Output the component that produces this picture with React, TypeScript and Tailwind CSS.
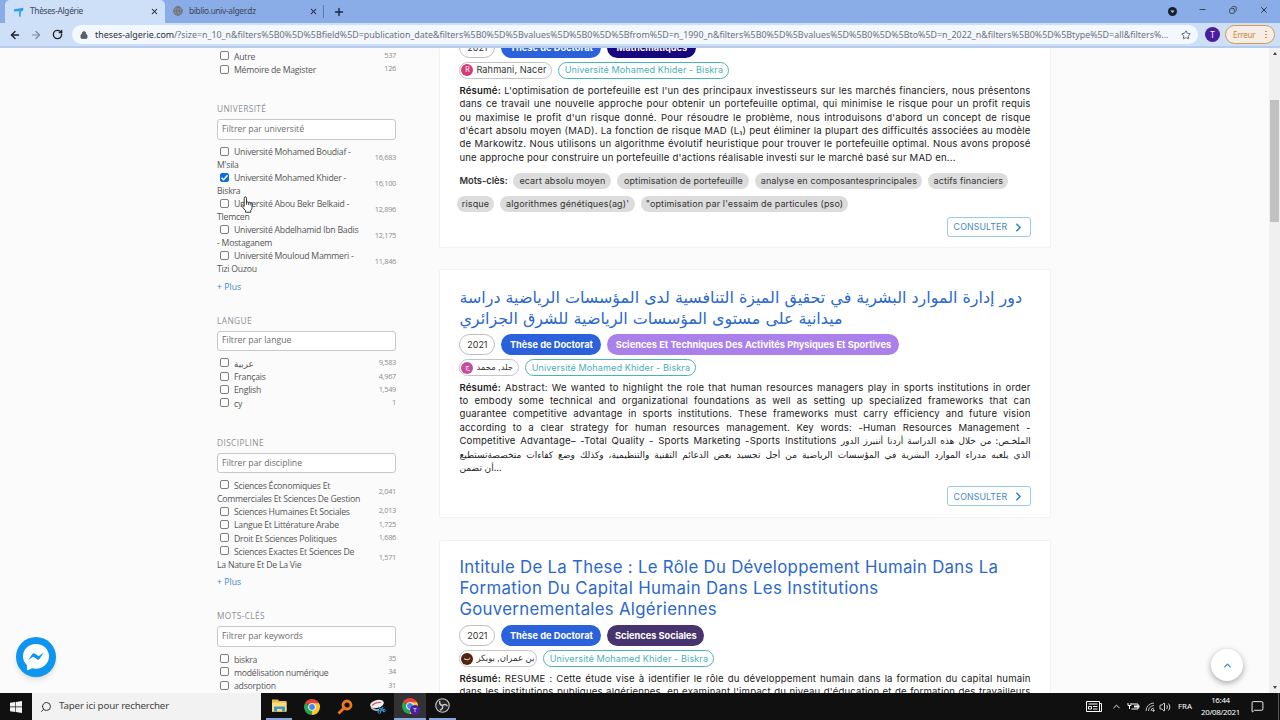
import React from 'react';
import clsx from 'clsx';
import { ArrowLeft, ArrowRight, RotateCw, Lock, Star, X, Plus, Minus, Copy, Search, ChevronUp, ChevronRight, Globe, Volume2, MessageSquare } from 'lucide-react';

interface FacetItem {
  label: string[];
  count: string;
  checked?: boolean;
}

interface FacetProps {
  title?: string;
  placeholder?: string;
  items: FacetItem[];
  more?: boolean;
}

const typeItems: FacetItem[] = [
  { label: ['Autre'], count: '537' },
  { label: ['Mémoire de Magister'], count: '126' },
];

const universityItems: FacetItem[] = [
  { label: ['Université Mohamed Boudiaf -', "M'sila"], count: '16,683' },
  { label: ['Université Mohamed Khider -', 'Biskra'], count: '16,100', checked: true },
  { label: ['Université Abou Bekr Belkaid -', 'Tlemcen'], count: '12,896' },
  { label: ['Université Abdelhamid Ibn Badis', '- Mostaganem'], count: '12,175' },
  { label: ['Université Mouloud Mammeri -', 'Tizi Ouzou'], count: '11,846' },
];

const languageItems: FacetItem[] = [
  { label: ['عربية'], count: '9,583' },
  { label: ['Français'], count: '4,967' },
  { label: ['English'], count: '1,549' },
  { label: ['cy'], count: '1' },
];

const disciplineItems: FacetItem[] = [
  { label: ['Sciences Économiques Et', 'Commerciales Et Sciences De Gestion'], count: '2,041' },
  { label: ['Sciences Humaines Et Sociales'], count: '2,013' },
  { label: ['Langue Et Littérature Arabe'], count: '1,725' },
  { label: ['Droit Et Sciences Politiques'], count: '1,686' },
  { label: ['Sciences Exactes Et Sciences De', 'La Nature Et De La Vie'], count: '1,571' },
];

const keywordItems: FacetItem[] = [
  { label: ['biskra'], count: '35' },
  { label: ['modélisation numérique'], count: '34' },
  { label: ['adsorption'], count: '31' },
];

const Checkbox: React.FC<{ checked?: boolean }> = ({ checked }) => (
  <span className={clsx('ml-[3px] mr-[5px] -mt-[3px] flex h-[9px] w-[9px] shrink-0 items-center justify-center rounded-[2px] border', checked ? 'border-[#0b6fe0] bg-[#0b6fe0]' : 'border-[#7d7d7d] bg-white')}>
    {checked && (
      <svg viewBox="0 0 9 9" className="h-[9px] w-[9px] shrink-0" fill="none" stroke="white" strokeWidth="1.5">
        <path d="M1.5 4.7 3.6 6.7 7.6 2.2" />
      </svg>
    )}
  </span>
);

const Facet: React.FC<FacetProps> = ({ title, placeholder, items, more }) => (
  <div className={more ? 'mb-[21px]' : 'mb-[26px]'}>
    {title && (
      <>
        <h3 className="h-[16px] text-[8.3px] leading-[12px] tracking-[0.4px] text-[#8b8e93]">{title}</h3>
        <div className="mb-[6.4px] flex h-[20.5px] items-center rounded-[3px] border border-[#c8c8c8] bg-white pl-[4px] text-[8.7px] text-[#6d6d6d]">{placeholder}</div>
      </>
    )}
    {items.map((item) => (
      <div key={item.label[0]} className={clsx('flex items-center justify-between', item.label.length > 1 ? 'h-[26px]' : 'h-[13.35px]')}>
        <div className="text-[8.7px] leading-[13px] tracking-[-0.24px] whitespace-nowrap text-[#565656]">
          <div className="flex items-center">
            <Checkbox checked={item.checked} />
            {item.label[0]}
          </div>
          {item.label[1] && <div>{item.label[1]}</div>}
        </div>
        <span className="-mt-[3px] text-[7.4px] tracking-[-0.3px] text-[#8c8c8c]">{item.count}</span>
      </div>
    ))}
    {more && <div className="mt-[4.6px] h-[13px] text-[8.7px] leading-[13px] text-[#3c87c7]">+ Plus</div>}
  </div>
);

interface BadgesProps {
  kind: string;
  kindClass: string;
}

const Badges: React.FC<BadgesProps> = ({ kind, kindClass }) => (
  <div className="flex h-[21px] gap-[6px] text-[9.25px] font-bold whitespace-nowrap text-white">
    <span className="flex w-[36px] items-center justify-center rounded-full border border-[#bdbdbd] bg-white text-[9px] font-normal text-[#333]">2021</span>
    <span className="flex w-[100px] items-center justify-center rounded-full bg-[#2b62db]">Thèse de Doctorat</span>
    <span className={clsx('flex items-center justify-center rounded-full', kindClass)}>{kind}</span>
  </div>
);

interface AuthorProps {
  name: string;
  initial: string;
  arabic?: boolean;
  avatarClass: string;
  boxClass: string;
}

const Author: React.FC<AuthorProps> = ({ name, initial, arabic, avatarClass, boxClass }) => (
  <div className="mt-[4px] flex h-[16.5px] gap-[6px] whitespace-nowrap">
    <span className={clsx('flex items-center rounded-full border border-[#c4c4c4] pl-[1px] text-[#333]', boxClass)}>
      <span className={clsx('mr-[3px] flex h-[12px] w-[12px] shrink-0 items-center justify-center rounded-full text-[7px] text-white', avatarClass)}>{initial}</span>
      <span className={arabic ? 'text-[8.5px]' : 'text-[9.2px] tracking-[0.1px]'}>{name}</span>
    </span>
    <span className="flex w-[171px] items-center justify-center rounded-full border border-[#4bb5b5] text-[9.1px] tracking-[0.1px] text-[#4bb0b4]">Université Mohamed Khider - Biskra</span>
  </div>
);

const Line: React.FC<{ children: React.ReactNode; last?: boolean }> = ({ children, last }) => (
  <div className={clsx('h-[13.35px] whitespace-nowrap', !last && '[text-align-last:justify]')}>{children}</div>
);

const Keyword: React.FC<{ children: string; width: string }> = ({ children, width }) => (
  <span className={clsx('flex h-[16px] items-center justify-center rounded-full bg-[#dcdcdc] text-[9px] tracking-[0.12px] whitespace-nowrap text-[#333]', width)}>{children}</span>
);

const Consulter: React.FC = () => (
  <div className="flex h-[20px] w-[84px] items-center justify-between self-end rounded-[3px] border border-[#9cc9e6] pr-[6px] pl-[6px] text-[8.8px] tracking-[0.1px] text-[#4589c4]">
    CONSULTER
    <ChevronRight size={13} strokeWidth={3} className="-mr-[1px] text-[#2e86d0]" />
  </div>
);

const card = 'flex shrink-0 flex-col rounded-[2px] border border-[#f2f2f2] bg-white px-[19.4px]';
const body = 'text-[9.6px] leading-[13.35px] tracking-[0.17px] text-[#222]';

const Results: React.FC = () => (
  <main className="ml-[43px] flex w-[612px] flex-col gap-[21.5px] font-[Inter,'DejaVu_Sans',sans-serif]">
    <section className={clsx(card, 'h-[199.5px] border-t-0')}>
      <div className="-mt-[11px]">
        <Badges kind="Mathématiques" kindClass="w-[89px] bg-[#17067d]" />
      </div>
      <Author name="Rahmani, Nacer" initial="R" avatarClass="bg-[#d23d77]" boxClass="w-[93px]" />
      <div className={clsx(body, 'mt-[5.5px]')}>
        <Line><b className="font-semibold">Résumé:</b> L'optimisation de portefeuille est l'un des principaux investisseurs sur les marchés financiers, nous présentons</Line>
        <Line>dans ce travail une nouvelle approche pour obtenir un portefeuille optimal, qui minimise le risque pour un profit requis</Line>
        <Line>ou maximise le profit d'un risque donné. Pour résoudre le problème, nous introduisons d'abord un concept de risque</Line>
        <Line>d'écart absolu moyen (MAD). La fonction de risque MAD (L₁) peut éliminer la plupart des difficultés associées au modèle</Line>
        <Line>de Markowitz. Nous utilisons un algorithme évolutif heuristique pour trouver le portefeuille optimal. Nous avons proposé</Line>
        <Line last>une approche pour construire un portefeuille d'actions réalisable investi sur le marché basé sur MAD en...</Line>
      </div>
      <div className="mt-[9px] flex gap-[6px]">
        <b className="-mr-[1px] w-[49px] text-[9.3px] leading-[16px] font-semibold whitespace-nowrap text-[#333]">Mots-clès:</b>
        <Keyword width="w-[98px]">ecart absolu moyen</Keyword>
        <Keyword width="w-[132px]">optimisation de portefeuille</Keyword>
        <Keyword width="w-[167px]">analyse en composantesprincipales</Keyword>
        <Keyword width="w-[80px]">actifs financiers</Keyword>
      </div>
      <div className="mt-[7px] -ml-[2.4px] flex gap-[6px]">
        <Keyword width="w-[37px]">risque</Keyword>
        <Keyword width="w-[135px]">algorithmes génétiques(ag)'</Keyword>
        <Keyword width="w-[207px]">"optimisation par l'essaim de particules (pso)</Keyword>
      </div>
      <div className="mt-[5px] flex flex-col"><Consulter /></div>
    </section>

    <section className={clsx(card, 'h-[249px] pt-[17px]')}>
      <h2 className="font-['DejaVu_Sans'] text-[15.95px] leading-[21.3px] whitespace-nowrap text-[#2a68cc]">
        <div>دور إدارة الموارد البشرية في تحقيق الميزة التنافسية لدى المؤسسات الرياضية دراسة</div>
        <div>ميدانية على مستوى المؤسسات الرياضية للشرق الجزائري</div>
      </h2>
      <div className="mt-[4.7px]">
        <Badges kind="Sciences Et Techniques Des Activités Physiques Et Sportives" kindClass="w-[292px] bg-[#aa80ea]" />
      </div>
      <Author name="جلد, محمد" initial="ج" arabic avatarClass="bg-[#c54ba3]" boxClass="w-[60px]" />
      <div className={clsx(body, 'mt-[5px]')}>
        <Line><b className="font-semibold">Résumé:</b> Abstract: We wanted to highlight the role that human resources managers play in sports institutions in order</Line>
        <Line>to embody some technical and organizational foundations as well as setting up specialized frameworks that can</Line>
        <Line>guarantee competitive advantage in sports institutions. These frameworks must carry efficiency and future vision</Line>
        <Line>according to a clear strategy for human resources management. Key words: -Human Resources Management -</Line>
        <Line>Competitive Advantage– -Total Quality - Sports Marketing -Sports Institutions <span className="text-[8.9px] leading-none tracking-normal">الملخـص: من خلال هذه الدراسة أردنا أننبرز الدور</span></Line>
        <Line><span className="text-[9px] leading-none tracking-normal">الذي يلعبه مدراء الموارد البشرية في المؤسسات الرياضية من أجل تجسيد بعض الدعائم التقنية والتنظيمية، وكذلك وضع كفاءات متخصصةتستطيع</span></Line>
        <Line last><span className="text-[9.1px] leading-none tracking-normal">أن تضمن...</span></Line>
      </div>
      <div className="mt-[12px] flex flex-col"><Consulter /></div>
    </section>

    <section className={clsx(card, 'h-[249px] pt-[16px]')}>
      <h2 className="text-[16.8px] leading-[21.3px] tracking-[0.3px] whitespace-nowrap text-[#2a68cc]">
        <div>Intitule De La These : Le Rôle Du Développement Humain Dans La</div>
        <div className="tracking-[0.38px]">Formation Du Capital Humain Dans Les Institutions</div>
        <div>Gouvernementales Algériennes</div>
      </h2>
      <div className="mt-[5px]">
        <Badges kind="Sciences Sociales" kindClass="w-[97px] bg-[#47346f]" />
      </div>
      <Author name="بن عمران, بوبكر" initial="ب" arabic avatarClass="bg-[#53210e]" boxClass="w-[78px]" />
      <div className={clsx(body, 'mt-[5px]')}>
        <Line><b className="font-semibold">Résumé:</b> RESUME : Cette étude vise à identifier le rôle du développement humain dans la formation du capital humain</Line>
        <Line>dans les institutions publiques algériennes, en examinant l'impact du niveau d'éducation et de formation des travailleurs</Line>
      </div>
    </section>
  </main>
);

const Browser: React.FC = () => (
  <header className="h-[48px] bg-[#8aade8]">
    <div className="flex h-[23px] items-center text-[8.4px] tracking-[-0.35px] text-[#3c4757]">
      <div className="ml-[5px] flex h-full w-[160px] items-center rounded-t-[5px] bg-[#cedff8] pr-[6px] pl-[9px]">
        <svg viewBox="0 0 10 10" className="mr-[6px] h-[10px] w-[10px]">
          <path d="M0 2.2 9.5.7 9 4 0 4.6z" fill="#2e9fe6" />
          <path d="M4.8 3.5h2.8L6.5 9.8H5z" fill="#4aa9df" />
        </svg>
        <span className="flex-1">Thèses-Algérie</span>
        <X size={9} strokeWidth={2.8} className="text-[#222]" />
      </div>
      <div className="flex w-[159px] items-center border-r border-[#587cb5] pr-[5px] pl-[8px]">
        <Globe size={10} strokeWidth={2.4} className="mr-[6px] rounded-full bg-[#8a929d] text-[#69717c]" />
        <span className="flex-1">biblio.univ-alger.dz</span>
        <X size={9} strokeWidth={2.8} className="text-[#222]" />
      </div>
      <Plus size={12} strokeWidth={2.8} className="ml-[9px] text-[#1d2633]" />
      <svg viewBox="0 0 10 10" className="mr-[21px] ml-auto h-[9px] w-[9px]">
        <circle cx="5" cy="5" r="5" fill="#16202e" />
        <path d="M2.8 4h4.4L5 6.8z" fill="#b9cff2" />
      </svg>
      <Minus size={9} className="mr-[22px] -translate-y-[2px] text-[#222]" />
      <Copy size={8} className="mr-[22px] -translate-y-[2px] -scale-x-100 text-[#222]" />
      <X size={10} className="mr-[11px] -translate-y-[2px] text-[#222]" />
    </div>
    <div className="flex h-[25px] items-center border-b-2 border-[#b8cbea] bg-[#cedff8]">
      <ArrowLeft size={12} strokeWidth={2.8} className="ml-[9px] text-[#222]" />
      <ArrowRight size={12} strokeWidth={2.4} className="ml-[9px] text-[#7e8a9c]" />
      <RotateCw size={11} strokeWidth={3} className="ml-[10px] text-[#222]" />
      <div className="ml-[9px] flex h-[19px] w-[1126px] items-center rounded-full bg-[#f3f8fe] pr-[7px] pl-[8px]">
        <Lock size={8} strokeWidth={3} fill="#5c6066" className="mr-[7px] text-[#5c6066]" />
        <div className="flex-1 text-[8.9px] whitespace-nowrap text-[#6c7178]">
          <span className="text-[#2a2f36]">theses-algerie.com</span>/?size=n_10_n&amp;filters%5B0%5D%5Bfield%5D=publication_date&amp;filters%5B0%5D%5Bvalues%5D%5B0%5D%5Bfrom%5D=n_1990_n&amp;filters%5B0%5D%5Bvalues%5D%5B0%5D%5Bto%5D=n_2022_n&amp;filters%5B0%5D%5Btype%5D=all&amp;filters%...
        </div>
        <Star size={10} strokeWidth={2.2} className="shrink-0 text-[#555b63]" />
      </div>
      <span className="ml-[7px] flex h-[15px] w-[15px] items-center justify-center rounded-full bg-[#4c1c9e] text-[8px] text-white">T</span>
      <div className="ml-[5px] flex h-[18.5px] w-[50px] items-center justify-between rounded-full border border-[#d69a51] bg-[#f6eee6] pr-[7px] pl-[7px] text-[8px] tracking-[-0.2px] text-[#cf842c]">
        Erreur
        <span className="flex flex-col gap-[1.5px]">
          <i className="h-[1.6px] w-[1.6px] bg-[#d98e36]" />
          <i className="h-[1.6px] w-[1.6px] bg-[#d98e36]" />
          <i className="h-[1.6px] w-[1.6px] bg-[#d98e36]" />
        </span>
      </div>
    </div>
  </header>
);

const ChromeLogo: React.FC = () => (
  <svg viewBox="0 0 16 16" className="h-[16px] w-[16px]">
    <path d="M8 8 1.1 4A8 8 0 0 1 14.9 4z" fill="#e24436" />
    <path d="M8 8 14.9 4A8 8 0 0 1 8 16z" fill="#f7c62c" />
    <path d="M8 8v8A8 8 0 0 1 1.1 4z" fill="#2fa351" />
    <path d="M8 4.2h6.9L16 8 11 10z" fill="#f7c62c" />
    <circle cx="8" cy="8" r="3.8" fill="#fff" />
    <circle cx="8" cy="8" r="2.9" fill="#4786ee" />
  </svg>
);

const Taskbar: React.FC = () => (
  <footer className="flex h-[27px] items-center bg-[#101011] text-white">
    <div className="flex w-[32px] justify-center">
      <svg viewBox="0 0 12 12" className="h-[12px] w-[12px]" fill="#f3f3f3">
        <path d="M0 1.7 5.4 1v4.6H0zM6 .9 12 0v5.6H6zM0 6.3h5.4V11L0 10.2zM6 6.3h6V12l-6-.9z" />
      </svg>
    </div>
    <div className="flex h-full w-[229px] items-center bg-[#f2f2f2] pl-[8px] text-[9.8px] tracking-[-0.2px] text-[#444]">
      <Search size={12} strokeWidth={1.8} className="mr-[7px] -scale-x-100 text-[#222]" />
      Taper ici pour rechercher
    </div>
    <div className="ml-[5px] flex h-full w-[26px] items-center justify-center border-b-2 border-[#8ba6dc]">
      <svg viewBox="0 0 15 13" className="h-[13px] w-[15px]">
        <path d="M0 .5h6l1 1.5h7.5v11H0z" fill="#e9b93d" />
        <path d="M0 3.5h14.5V12H0z" fill="#fbdc7b" />
        <path d="M2 12.5V7.5h11v5h-3V10H5v2.5z" fill="#3e95d3" />
      </svg>
    </div>
    <div className="ml-[12px]"><ChromeLogo /></div>
    <svg viewBox="0 0 16 16" className="ml-[17px] h-[16px] w-[16px]" fill="none" stroke="#ee7913">
      <circle cx="10" cy="6" r="4" strokeWidth="2.8" />
      <path d="M7 9 1.5 14.5" strokeWidth="2.8" />
    </svg>
    <svg viewBox="0 0 17 15" className="ml-[16px] h-[15px] w-[17px]">
      <ellipse cx="8" cy="5" rx="7" ry="4" fill="#eee" transform="rotate(-15 8 5)" />
      <path d="M3 6.5q4-4 9-3" stroke="#d2596c" strokeWidth="1.2" fill="none" />
      <path d="M2 8.5q4 4 8 2" stroke="#c2cbd4" strokeWidth="1.5" fill="none" />
      <path d="m9 8 6 4M14 8l-3 5" stroke="#3c94c9" strokeWidth="1.3" />
      <circle cx="10.5" cy="13" r="1.4" stroke="#3c94c9" fill="none" />
      <circle cx="15" cy="11.5" r="1.3" stroke="#3c94c9" fill="none" />
    </svg>
    <div className="relative ml-[8px] flex h-full w-[32px] items-center justify-center border-b-2 border-[#8ba6dc] bg-[#323234]">
      <ChromeLogo />
      <span className="absolute right-[6px] bottom-[3px] flex h-[10px] w-[10px] items-center justify-center rounded-full bg-[#4c1fa5] text-[6px]">T</span>
    </div>
    <div className="ml-[3px] flex h-full w-[27px] items-center justify-center border-b-2 border-[#8ba6dc]">
      <svg viewBox="0 0 16 16" className="h-[15px] w-[15px]" fill="none" stroke="#c9c9c9">
        <circle cx="8" cy="8" r="7.2" fill="#252529" strokeWidth="1.2" />
        <path d="M8 8Q4.5 7.5 5 3.2M8 8q2.5-2.5 5.2.5M8 8q1 3.8-2.8 4.8" strokeWidth="1.5" />
      </svg>
    </div>
    <div className="ml-auto flex h-full items-center">
      <svg viewBox="0 0 16 11" className="mr-[9px] h-[11px] w-[16px]" fill="none" stroke="white">
        <path d="M.5.5h13v10H.5zM13.5 2.5h2v8h-2M2.5 3h9M2.5 5.5h3v2.500h-3zM7 5.5h4.500M7 8h4.500" />
      </svg>
      <ChevronUp size={11} className="mr-[5px]" />
      <svg viewBox="0 0 13 9" className="mr-[5px] h-[9px] w-[13px]" fill="none" stroke="white">
        <path d="M4.5 2h6.5v5H4.5M1 1v2.5h3V1M2.5 3.5V7" />
        <path d="M11 4.5h1.5M7 4.5h4" strokeWidth="2" />
      </svg>
      <svg viewBox="0 0 10 10" className="mr-[4px] h-[10px] w-[10px]" fill="none" stroke="#bbb">
        <path d="M1 9a8 8 0 0 1 8-8M3.5 9A5.5 5.5 0 0 1 9 3.5M6 9a3 3 0 0 1 3-3" />
        <circle cx="8.5" cy="8.5" r=".8" fill="#fff" />
      </svg>
      <Volume2 size={12} strokeWidth={1.7} className="mr-[7px]" />
      <span className="w-[14px] text-[7.9px]">FRA</span>
      <div className="ml-[8px] w-[41px] text-center text-[7.9px] leading-[11.5px] tracking-[-0.3px]">
        <div>16:44</div>
        <div>20/08/2021</div>
      </div>
      <MessageSquare size={13} strokeWidth={1.7} className="mr-[14px] ml-[10px]" />
      <div className="h-full w-[2px] border-l border-[#555]" />
    </div>
  </footer>
);

const HandCursor: React.FC = () => (
  <svg viewBox="0 0 12 17" className="absolute top-[148px] left-[241px] h-[17px] w-[12px]">
    <path d="M3.2 10.5V2.2q0-1.4 1.1-1.4t1.2 1.4v4q.9-.8 1.8.2.9-.7 1.8.3 1.9-.6 1.9 1.3v3.2q0 2.3-1.2 3.2v1.8H4.5v-1.5L.8 10.3Q.2 9 1.4 8.9z" fill="#fff" stroke="#222" strokeWidth=".9" />
    <path d="M5.5 6v2.8M7.4 6.6v2.5M9.2 7v2.3" stroke="#222" strokeWidth=".8" />
  </svg>
);

const App: React.FC = () => (
  <div className="flex h-[720px] w-[1280px] flex-col overflow-hidden bg-[#fbfbfb] font-['Noto_Sans','DejaVu_Sans',sans-serif]">
    <Browser />
    <div className="relative flex h-[645px] overflow-hidden">
      <aside className="ml-[217px] w-[179px] shrink-0 pt-[2.5px] font-['Open_Sans','DejaVu_Sans',sans-serif]">
        <Facet items={typeItems} />
        <Facet title="UNIVERSITÉ" placeholder="Filtrer par université" items={universityItems} more />
        <Facet title="LANGUE" placeholder="Filtrer par langue" items={languageItems} />
        <Facet title="DISCIPLINE" placeholder="Filtrer par discipline" items={disciplineItems} more />
        <Facet title="MOTS-CLÉS" placeholder="Filtrer par keywords" items={keywordItems} />
      </aside>
      <Results />
      <div className="ml-auto flex h-full w-[11px] flex-col items-center bg-[#f0f0f0]">
        <i className="mt-[4px] border-x-[2.5px] border-b-[3px] border-x-transparent border-b-[#444]" />
        <i className="mt-[45px] h-[122px] w-[9px] bg-[#c1c1c1]" />
        <i className="mt-auto mb-[4px] border-x-[2.5px] border-t-[3px] border-x-transparent border-t-[#444]" />
      </div>

      <HandCursor />
      <div className="absolute top-[589px] left-[16px] flex h-[40px] w-[40px] items-center justify-center rounded-full bg-[#0d95ef] shadow-md">
        <svg viewBox="0 0 28 28" className="h-[28px] w-[28px]">
          <path d="M14 1C6.7 1 1 6.3 1 13.3c0 3.6 1.5 6.7 4 8.9v4.3q.2 1 1.2.6l4-1.9c1.2.3 2.5.5 3.8.5 7.3 0 13-5.3 13-12.4S21.3 1 14 1z" fill="#fff" />
          <path d="m6.3 17 4-6q1.2-1.5 2.7-.4l3 2.2q.6.4 1.2 0l4.500-3.300-4.200 6.400q-1.200 1.500-2.700.4l-3-2.200q-.6-.4-1.200 0z" fill="#0d95ef" />
        </svg>
      </div>
      <div className="absolute top-[601px] left-[1211px] flex h-[32px] w-[32px] items-center justify-center rounded-full bg-white shadow-[0_2px_6px_rgba(0,0,0,0.35)]">
        <ChevronUp size={11} strokeWidth={3} className="text-[#3e8dcc]" />
      </div>
    </div>
    <Taskbar />
  </div>
);

export default App;
